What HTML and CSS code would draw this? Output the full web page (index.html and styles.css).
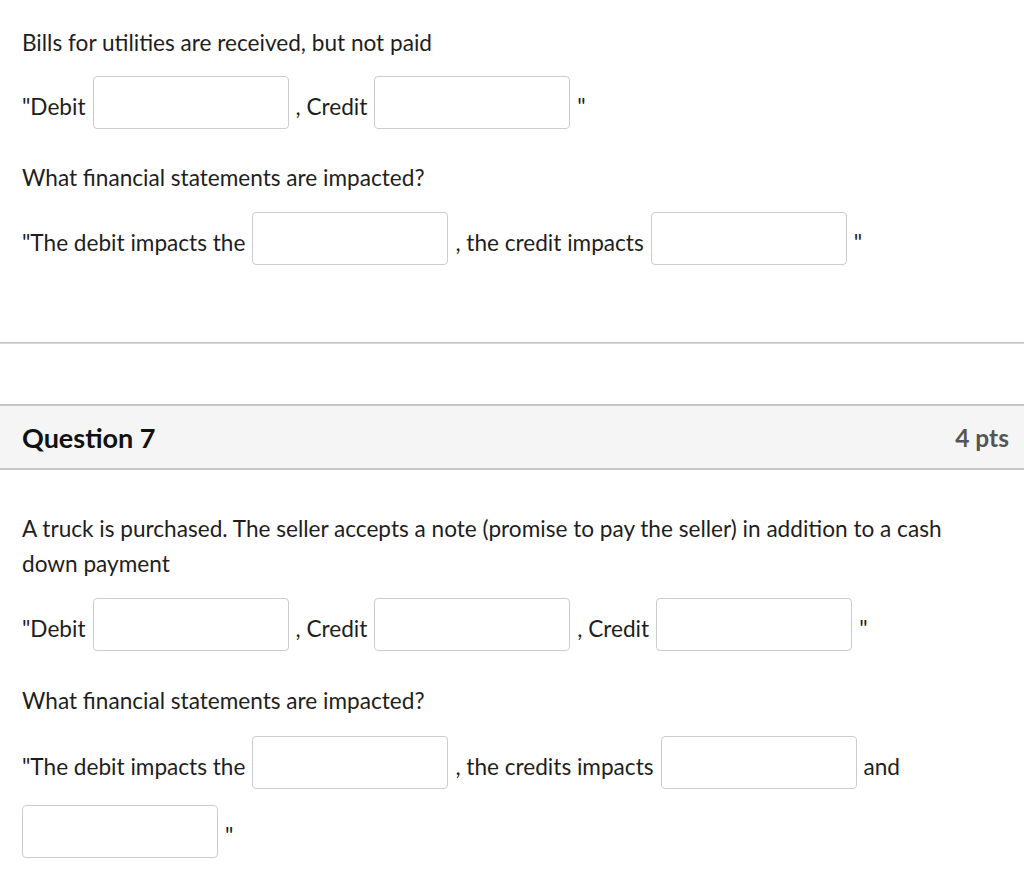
FILE: index.html
```html
<!DOCTYPE html>
<html>
<head>
<meta charset="utf-8">
<link rel="stylesheet" href="styles.css">
</head>
<body>
<div class="question-body first">
  <div class="text t1">Bills for utilities are received, but not paid</div>
  <div class="row r1">
    <span>"Debit</span><span class="box"></span><span>, Credit</span><span class="box"></span><span>"</span>
  </div>
  <div class="text t2">What financial statements are impacted?</div>
  <div class="row r2">
    <span>"The debit impacts the</span><span class="box"></span><span>, the credit impacts</span><span class="box"></span><span>"</span>
  </div>
</div>
<div class="divider"></div>
<div class="q-header">
  <span class="q-title">Question 7</span>
  <span class="q-pts">4 pts</span>
</div>
<div class="question-body">
  <div class="text t3">A truck is purchased. The seller accepts a note (promise to pay the seller) in addition to a cash down payment</div>
  <div class="row r3">
    <span>"Debit</span><span class="box"></span><span>, Credit</span><span class="box"></span><span>, Credit</span><span class="box"></span><span>"</span>
  </div>
  <div class="text t4">What financial statements are impacted?</div>
  <div class="row r4">
    <span>"The debit impacts the</span><span class="box"></span><span>, the credits impacts</span><span class="box"></span><span>and</span><span class="box wrapped"></span><span>"</span>
  </div>
</div>
</body>
</html>
```

FILE: styles.css
```css
html, body {
  margin: 0;
  padding: 0;
  background: #ffffff;
}
body {
  font-family: Lato, "Open Sans", sans-serif;
  font-size: 22.6px;
  line-height: 35px;
  color: #1e1e1e;
  width: 1024px;
}
.question-body {
  padding: 0 22px;
  width: 960px;
}
.text {
  margin: 0;
}
.t1 { padding-top: 25px; }
.t2 { margin-top: 31px; }
.t3 { margin-top: 41px; }
.t4 { margin-top: 32px; }
.row {
  display: flex;
  flex-wrap: wrap;
  align-items: flex-end;
  column-gap: 6px;
  row-gap: 16px;
}
.row > span:not(.box) {
  margin-bottom: 5px;
}
.r1 { margin-top: 16px; }
.r2 { margin-top: 17px; }
.r3 { margin-top: 17px; }
.r4 { margin-top: 18px; }
.box {
  display: inline-block;
  width: 194px;
  height: 51px;
  border: 1px solid #c9cdd1;
  border-radius: 4px;
  background: #fff;
  margin-left: 1px;
  margin-right: 1px;
}
.box.wrapped {
  margin-left: 0;
}
.divider {
  margin-top: 77px;
  height: 0;
  border-top: 1px solid #c4c4c4;
  border-bottom: 1px solid #d8d8d8;
}
.q-header {
  margin-top: 60px;
  display: flex;
  justify-content: space-between;
  align-items: center;
  height: 62px;
  padding: 0 15px 0 22px;
  background: #f5f5f5;
  border-top: 2px solid #c6c6c6;
  border-bottom: 2px solid #c6c6c6;
}
.q-title {
  font-weight: 700;
  font-size: 27px;
  color: #111;
}
.q-pts {
  font-weight: 700;
  font-size: 24.5px;
  color: #555;
}
```
